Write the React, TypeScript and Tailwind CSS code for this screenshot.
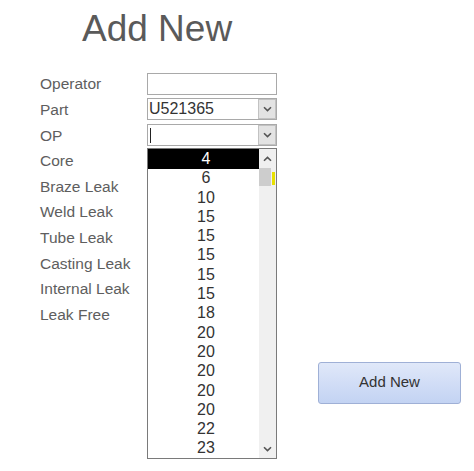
import React from "react";

const labels = [
  "Operator",
  "Part",
  "OP",
  "Core",
  "Braze Leak",
  "Weld Leak",
  "Tube Leak",
  "Casting Leak",
  "Internal Leak",
  "Leak Free",
];

const ops = ["4", "6", "10", "15", "15", "15", "15", "15", "18", "20", "20", "20", "20", "20", "22", "23"];

function Chevron({ up = false }: { up?: boolean }) {
  return (
    <svg width="9" height="6" viewBox="0 0 9 6" className={up ? "rotate-180" : ""}>
      <path d="M1 1.2 L4.5 4.6 L8 1.2" fill="none" stroke="#555" strokeWidth="1.6" />
    </svg>
  );
}

function SelectBox({ value, caret = false }: { value?: string; caret?: boolean }) {
  return (
    <div className="flex h-[22px] w-[130px] border border-[#a9a9a9] bg-white">
      <div className="flex flex-1 items-center overflow-hidden pl-[1px] text-[16px] leading-none text-[#333]">
        {caret ? <span className="ml-[1px] h-[15px] w-[1px] bg-[#222]" /> : value}
      </div>
      <div className="flex w-[18px] items-center justify-center border border-[#c2c2c2] bg-[#e3e3e3]">
        <Chevron />
      </div>
    </div>
  );
}

export default function App() {
  return (
    <div
      className="relative h-[471px] w-[474px] overflow-hidden bg-white"
      style={{ fontFamily: '"Liberation Sans", Arial, sans-serif' }}
    >
      <div className="pl-[82px] pt-[8px] text-[37px] leading-[42px] text-[#5a5a5a]">Add New</div>
      <div className="mt-[21px] flex">
        <div className="flex w-[147px] flex-col pl-[40px]">
          {labels.map((l) => (
            <div key={l} className="flex h-[25.67px] items-center text-[15.5px] text-[#5e5e5e]">
              {l}
            </div>
          ))}
        </div>
        <div className="flex flex-col">
          <div className="flex h-[25.67px] items-center">
            <div className="h-[22px] w-[130px] border border-[#a9a9a9] bg-white" />
          </div>
          <div className="flex h-[25.67px] items-center">
            <SelectBox value="U521365" />
          </div>
          <div className="relative flex h-[25.67px] items-center">
            <SelectBox caret />
            <div className="absolute left-0 top-[26px] z-10 flex h-[311px] w-[130px] border border-[#7a7a7a] bg-white">
              <div className="flex flex-1 flex-col">
                {ops.map((o, i) => (
                  <div
                    key={i}
                    className={
                      "flex h-[19.3px] items-center justify-center pl-[5px] text-[16px] leading-none " +
                      (i === 0 ? "bg-black text-white" : "text-[#333]")
                    }
                  >
                    {o}
                  </div>
                ))}
              </div>
              <div className="relative flex w-[17px] flex-col bg-[#f0f0f0]">
                <div className="flex h-[19px] items-center justify-center">
                  <Chevron up />
                </div>
                <div className="h-[18px] w-[12px] bg-[#cdcdcd]" />
                <div className="absolute left-[13px] top-[23px] h-[13px] w-[3px] bg-[#e8e000]" />
                <div className="flex-1" />
                <div className="flex h-[19px] items-center justify-center">
                  <Chevron />
                </div>
              </div>
            </div>
          </div>
        </div>
      </div>
      <div className="mt-[34px] flex justify-end pr-[13px]">
        <button className="flex h-[42px] w-[143px] items-center justify-center rounded-[3px] border border-[#9fb0d6] bg-gradient-to-b from-[#e0e8f9] to-[#c3d3f3] text-[15px] text-[#333]">
          Add New
        </button>
      </div>
    </div>
  );
}
